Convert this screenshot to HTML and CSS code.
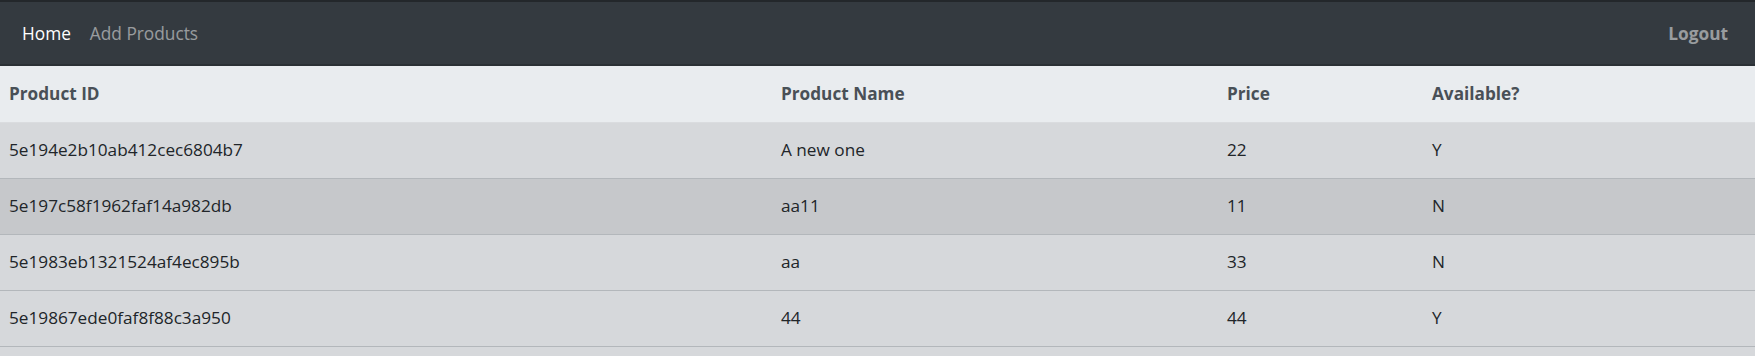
FILE: index.html
```html
<!DOCTYPE html>
<html lang="en">
<head>
<meta charset="utf-8">
<title>Products</title>
<link rel="stylesheet" href="styles.css">
</head>
<body>
<nav class="navbar">
  <div class="nav-left">
    <a class="nav-link active" href="#">Home</a>
    <a class="nav-link" href="#">Add Products</a>
  </div>
  <a class="nav-link logout" href="#">Logout</a>
</nav>
<table class="table">
  <colgroup>
    <col class="c1"><col class="c2"><col class="c3"><col class="c4">
  </colgroup>
  <thead>
    <tr><th>Product ID</th><th>Product Name</th><th>Price</th><th>Available?</th></tr>
  </thead>
  <tbody>
    <tr><td>5e194e2b10ab412cec6804b7</td><td>A new one</td><td>22</td><td>Y</td></tr>
    <tr class="hover"><td>5e197c58f1962faf14a982db</td><td>aa11</td><td>11</td><td>N</td></tr>
    <tr><td>5e1983eb1321524af4ec895b</td><td>aa</td><td>33</td><td>N</td></tr>
    <tr><td>5e19867ede0faf8f88c3a950</td><td>44</td><td>44</td><td>Y</td></tr>
    <tr><td></td><td></td><td></td><td></td></tr>
  </tbody>
</table>
</body>
</html>
```
FILE: styles.css
```css
html, body {
  margin: 0;
  padding: 0;
  background: #ffffff;
  font-family: "Open Sans", "Noto Sans", sans-serif;
  color: #212529;
}
.navbar {
  height: 66px;
  box-sizing: border-box;
  background: #343a40;
  border-top: 2px solid #23272b;
  border-bottom: 2px solid #2b3035;
  display: flex;
  align-items: center;
  justify-content: space-between;
  padding: 2px 27px 0 22px;
}
.nav-left {
  display: flex;
  gap: 19px;
}
.nav-link {
  font-size: 17.3px;
  text-decoration: none;
  color: rgba(255, 255, 255, 0.5);
  line-height: 24px;
}
.nav-link.active {
  color: #ffffff;
}
.logout {
  font-weight: 700;
}
.table {
  width: 100%;
  border-collapse: collapse;
  table-layout: fixed;
  font-size: 17.2px;
}
.c1 { width: 772px; }
.c2 { width: 446px; }
.c3 { width: 205px; }
.table th, .table td {
  height: 56px;
  padding: 0 9px;
  text-align: left;
  vertical-align: middle;
  line-height: 24px;
  box-sizing: border-box;
}
.table thead th {
  background: #e9ecef;
  color: #495057;
  font-weight: 700;
  border-bottom: 1px solid #dadcdf;
}
.table tbody td {
  background: #d6d8db;
  border-bottom: 1px solid #b3b7bb;
}
.table tbody tr.hover td {
  background: #c6c8cb;
}
```
